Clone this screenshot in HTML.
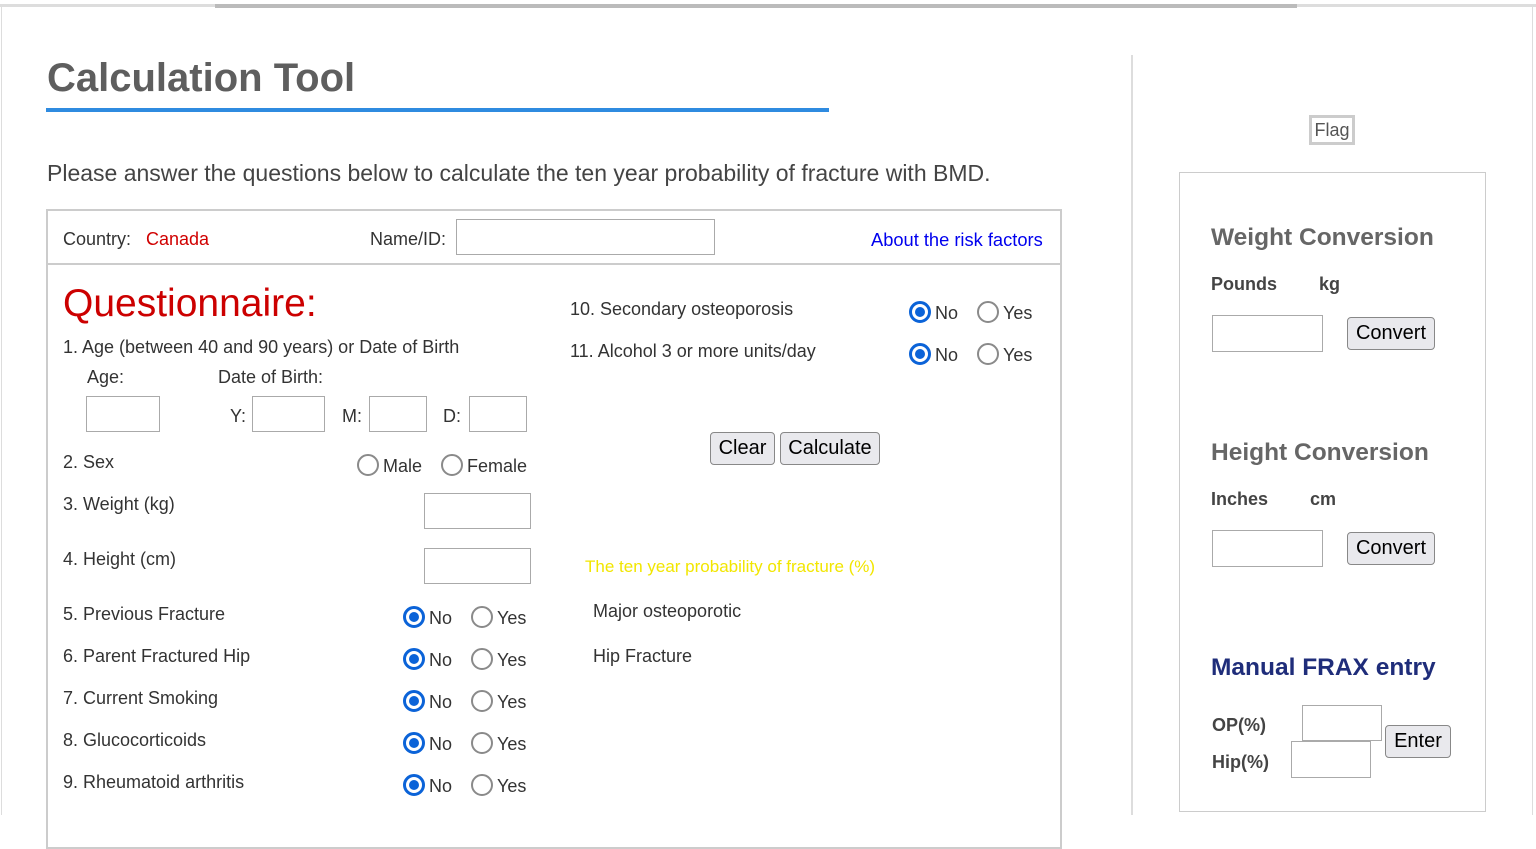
<!DOCTYPE html>
<html><head><style>
*{margin:0;padding:0;box-sizing:border-box}
body{width:1536px;height:815px;overflow:hidden;background:#fff;font-family:"Liberation Sans",Arial,sans-serif;position:relative;color:#333}
.a{position:absolute;white-space:nowrap}
.t{font-size:18px;color:#333}
.inp{position:absolute;border:1px solid #aaa;background:#fff}
.btn{position:absolute;border:1px solid #888;border-radius:4px;background:#e9e9ed;font-size:20px;color:#000;text-align:center}
.r{position:absolute;width:22px;height:22px;border-radius:50%;border:2px solid #8a8a8a;background:#fff}
.r.on{border:3px solid #0b63d8}
.r.on:after{content:"";position:absolute;left:3px;top:3px;width:10px;height:10px;border-radius:50%;background:#0b63d8}
.h2{font-weight:bold;font-size:24.5px;color:#666}
.b{font-weight:bold;font-size:18px;color:#444}
</style></head><body>
<div class="a" style="left:0;top:4px;width:1536px;height:3px;background:#ddd"></div>
<div class="a" style="left:215px;top:4px;width:1082px;height:4px;background:#bbb"></div>
<div class="a" style="left:1px;top:7px;width:1px;height:808px;background:#ddd"></div>
<div class="a" style="left:1532px;top:7px;width:1px;height:808px;background:#ddd"></div>

<div class="a" style="left:47px;top:56px;font-size:40px;font-weight:bold;color:#5e5e5e">Calculation Tool</div>
<div class="a" style="left:46px;top:108px;width:783px;height:4px;background:#2f8be0"></div>
<div class="a" style="left:47px;top:160px;font-size:23px;color:#444">Please answer the questions below to calculate the ten year probability of fracture with BMD.</div>

<div class="a" style="left:46px;top:209px;width:1016px;height:640px;border:2px solid #ccc"></div>
<div class="a" style="left:48px;top:263px;width:1012px;height:2px;background:#ccc"></div>
<div class="a t" style="left:63px;top:229px">Country:</div>
<div class="a t" style="left:146px;top:229px;color:#d00000">Canada</div>
<div class="a t" style="left:370px;top:229px">Name/ID:</div>
<div class="inp" style="left:456px;top:219px;width:259px;height:36px"></div>
<div class="a t" style="left:871px;top:229px;color:#0000ee;font-size:18.3px">About the risk factors</div>

<div class="a" style="left:63px;top:282px;font-size:39px;color:#cc0000">Questionnaire:</div>
<div class="a t" style="left:63px;top:337px">1. Age (between 40 and 90 years) or Date of Birth</div>
<div class="a t" style="left:87px;top:367px">Age:</div>
<div class="a t" style="left:218px;top:367px">Date of Birth:</div>
<div class="inp" style="left:86px;top:396px;width:74px;height:36px"></div>
<div class="a t" style="left:230px;top:406px">Y:</div>
<div class="inp" style="left:252px;top:396px;width:73px;height:36px"></div>
<div class="a t" style="left:342px;top:406px">M:</div>
<div class="inp" style="left:369px;top:396px;width:58px;height:36px"></div>
<div class="a t" style="left:443px;top:406px">D:</div>
<div class="inp" style="left:469px;top:396px;width:58px;height:36px"></div>

<div class="a t" style="left:63px;top:452px">2. Sex</div>
<div class="r" style="left:357px;top:454px"></div><div class="a t" style="left:383px;top:456px">Male</div>
<div class="r" style="left:441px;top:454px"></div><div class="a t" style="left:467px;top:456px">Female</div>
<div class="a t" style="left:63px;top:494px">3. Weight (kg)</div>
<div class="inp" style="left:424px;top:493px;width:107px;height:36px"></div>
<div class="a t" style="left:63px;top:549px">4. Height (cm)</div>
<div class="inp" style="left:424px;top:548px;width:107px;height:36px"></div>

<div class="a t" style="left:63px;top:604px">5. Previous Fracture</div>
<div class="a t" style="left:63px;top:646px">6. Parent Fractured Hip</div>
<div class="a t" style="left:63px;top:688px">7. Current Smoking</div>
<div class="a t" style="left:63px;top:730px">8. Glucocorticoids</div>
<div class="a t" style="left:63px;top:772px">9. Rheumatoid arthritis</div>
<div class="r on" style="left:403px;top:606px"></div><div class="a t" style="left:429px;top:608px">No</div><div class="r" style="left:471px;top:606px"></div><div class="a t" style="left:497px;top:608px">Yes</div>
<div class="r on" style="left:403px;top:648px"></div><div class="a t" style="left:429px;top:650px">No</div><div class="r" style="left:471px;top:648px"></div><div class="a t" style="left:497px;top:650px">Yes</div>
<div class="r on" style="left:403px;top:690px"></div><div class="a t" style="left:429px;top:692px">No</div><div class="r" style="left:471px;top:690px"></div><div class="a t" style="left:497px;top:692px">Yes</div>
<div class="r on" style="left:403px;top:732px"></div><div class="a t" style="left:429px;top:734px">No</div><div class="r" style="left:471px;top:732px"></div><div class="a t" style="left:497px;top:734px">Yes</div>
<div class="r on" style="left:403px;top:774px"></div><div class="a t" style="left:429px;top:776px">No</div><div class="r" style="left:471px;top:774px"></div><div class="a t" style="left:497px;top:776px">Yes</div>

<div class="a t" style="left:570px;top:299px">10. Secondary osteoporosis</div>
<div class="a t" style="left:570px;top:341px">11. Alcohol 3 or more units/day</div>
<div class="r on" style="left:909px;top:301px"></div><div class="a t" style="left:935px;top:303px">No</div><div class="r" style="left:977px;top:301px"></div><div class="a t" style="left:1003px;top:303px">Yes</div>
<div class="r on" style="left:909px;top:343px"></div><div class="a t" style="left:935px;top:345px">No</div><div class="r" style="left:977px;top:343px"></div><div class="a t" style="left:1003px;top:345px">Yes</div>

<div class="btn" style="left:710px;top:432px;width:65px;height:33px;line-height:31px">Clear</div>
<div class="btn" style="left:780px;top:432px;width:100px;height:33px;line-height:31px">Calculate</div>

<div class="a" style="left:585px;top:557px;font-size:17px;color:#f2e600">The ten year probability of fracture (%)</div>
<div class="a t" style="left:593px;top:601px">Major osteoporotic</div>
<div class="a t" style="left:593px;top:646px">Hip Fracture</div>

<div class="a" style="left:1131px;top:55px;width:2px;height:760px;background:#ddd"></div>
<div class="a" style="left:1309px;top:115px;width:46px;height:30px;border:3px solid #ccc;font-size:18px;color:#555;text-align:center;line-height:24px">Flag</div>

<div class="a" style="left:1179px;top:172px;width:307px;height:640px;border:1px solid #ccc"></div>
<div class="a h2" style="left:1211px;top:224px">Weight Conversion</div>
<div class="a b" style="left:1211px;top:274px">Pounds</div><div class="a b" style="left:1319px;top:274px">kg</div>
<div class="inp" style="left:1212px;top:315px;width:111px;height:37px"></div>
<div class="btn" style="left:1347px;top:317px;width:88px;height:33px;line-height:31px">Convert</div>

<div class="a h2" style="left:1211px;top:439px">Height Conversion</div>
<div class="a b" style="left:1211px;top:489px">Inches</div><div class="a b" style="left:1310px;top:489px">cm</div>
<div class="inp" style="left:1212px;top:530px;width:111px;height:37px"></div>
<div class="btn" style="left:1347px;top:532px;width:88px;height:33px;line-height:31px">Convert</div>

<div class="a" style="left:1211px;top:654px;font-size:24.5px;font-weight:bold;color:#1f2d7a">Manual FRAX entry</div>
<div class="a b" style="left:1212px;top:715px">OP(%)</div>
<div class="a b" style="left:1212px;top:752px">Hip(%)</div>
<div class="inp" style="left:1302px;top:705px;width:80px;height:36px"></div>
<div class="inp" style="left:1291px;top:741px;width:80px;height:37px"></div>
<div class="btn" style="left:1385px;top:725px;width:66px;height:33px;line-height:31px">Enter</div>
</body></html>
